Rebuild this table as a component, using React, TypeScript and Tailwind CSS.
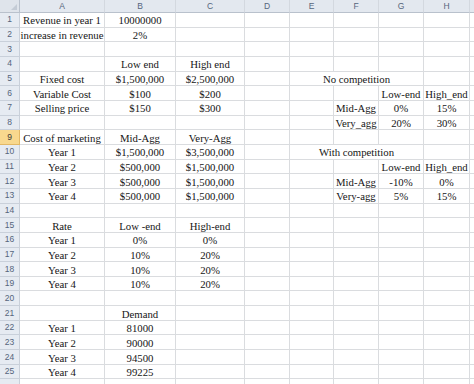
import React from 'react';

const COLS = ['A', 'B', 'C', 'D', 'E', 'F', 'G', 'H'];

// one entry per sheet row, columns A..H
const DATA: Record<number, string[]> = {
  1: ['Revenue in year 1', '10000000', '', '', '', '', '', ''],
  2: ['increase in revenue', '2%', '', '', '', '', '', ''],
  4: ['', 'Low end', 'High end', '', '', '', '', ''],
  5: ['Fixed cost', '$1,500,000', '$2,500,000', '', '', '', '', ''],
  6: ['Variable Cost', '$100', '$200', '', '', '', 'Low-end', 'High_end'],
  7: ['Selling price', '$150', '$300', '', '', 'Mid-Agg', '0%', '15%'],
  8: ['', '', '', '', '', 'Very_agg', '20%', '30%'],
  9: ['Cost of marketing', 'Mid-Agg', 'Very-Agg', '', '', '', '', ''],
  10: ['Year 1', '$1,500,000', '$3,500,000', '', '', '', '', ''],
  11: ['Year 2', '$500,000', '$1,500,000', '', '', '', 'Low-end', 'High_end'],
  12: ['Year 3', '$500,000', '$1,500,000', '', '', 'Mid-Agg', '-10%', '0%'],
  13: ['Year 4', '$500,000', '$1,500,000', '', '', 'Very-agg', '5%', '15%'],
  15: ['Rate', 'Low -end', 'High-end', '', '', '', '', ''],
  16: ['Year 1', '0%', '0%', '', '', '', '', ''],
  17: ['Year 2', '10%', '20%', '', '', '', '', ''],
  18: ['Year 3', '10%', '20%', '', '', '', '', ''],
  19: ['Year 4', '10%', '20%', '', '', '', '', ''],
  21: ['', 'Demand', '', '', '', '', '', ''],
  22: ['Year 1', '81000', '', '', '', '', '', ''],
  23: ['Year 2', '90000', '', '', '', '', '', ''],
  24: ['Year 3', '94500', '', '', '', '', '', ''],
  25: ['Year 4', '99225', '', '', '', '', '', ''],
};

// titles centred on F that spill over E and G
const SPANS: Record<number, string> = {
  5: 'No competition',
  10: 'With competition',
};

const ROW_COUNT = 26;

function Cell({ text, className = '' }: { text: string; className?: string }) {
  return (
    <div
      className={`flex items-center justify-center overflow-visible whitespace-nowrap border-r border-b border-[#dadcdf] pt-[2px] text-[10.75px] leading-none text-[#161616] ${className}`}
    >
      {text}
    </div>
  );
}

function SheetRow({ n }: { n: number }) {
  const values = DATA[n] ?? COLS.map(() => '');
  const span = SPANS[n];
  const selected = n === 9;

  return (
    <>
      <div
        className={`flex items-center justify-center border-r border-b font-['Liberation_Sans',sans-serif] text-[8.5px] ${
          selected
            ? 'border-[#e2b866] bg-[#f8d88e] text-[#3b3b3b]'
            : 'border-[#c9d0da] bg-[#e6ebf2] text-[#55657c]'
        }`}
      >
        {n < ROW_COUNT ? n : ''}
      </div>
      {values.map((v, i) => {
        if (span && (i === 5 || i === 6)) return null;
        if (span && i === 4) return <Cell key={i} text={span} className="col-span-3" />;
        return <Cell key={i} text={v} />;
      })}
      <div className="border-b border-[#dadcdf]" />
    </>
  );
}

export default function App() {
  return (
    <div className="h-[384px] w-[474px] overflow-hidden bg-white font-['Liberation_Serif',serif]">
      <div className="grid grid-cols-[20px_85px_71px_69px_45px_44px_45px_45px_46px_1fr] grid-rows-[13px_repeat(26,14.667px)]">
        {/* corner */}
        <div className="relative border-r border-b border-[#b9c1cc] bg-[#dfe4eb]">
          <div className="absolute right-[2px] bottom-[2px] h-0 w-0 border-t-[6px] border-l-[6px] border-t-transparent border-l-transparent border-b-0 border-r-[6px] border-r-[#c4cbd5]" />
        </div>
        {COLS.map((c) => (
          <div
            key={c}
            className="flex items-center justify-center border-r border-b border-r-[#d3d8df] border-b-[#b9c1cc] bg-[#e3e8ef] font-['Liberation_Sans',sans-serif] text-[8.5px] text-[#55657c]"
          >
            {c}
          </div>
        ))}
        <div className="border-b border-[#b9c1cc] bg-[#e3e8ef]" />
        {Array.from({ length: ROW_COUNT }, (_, i) => (
          <SheetRow key={i + 1} n={i + 1} />
        ))}
      </div>
    </div>
  );
}
